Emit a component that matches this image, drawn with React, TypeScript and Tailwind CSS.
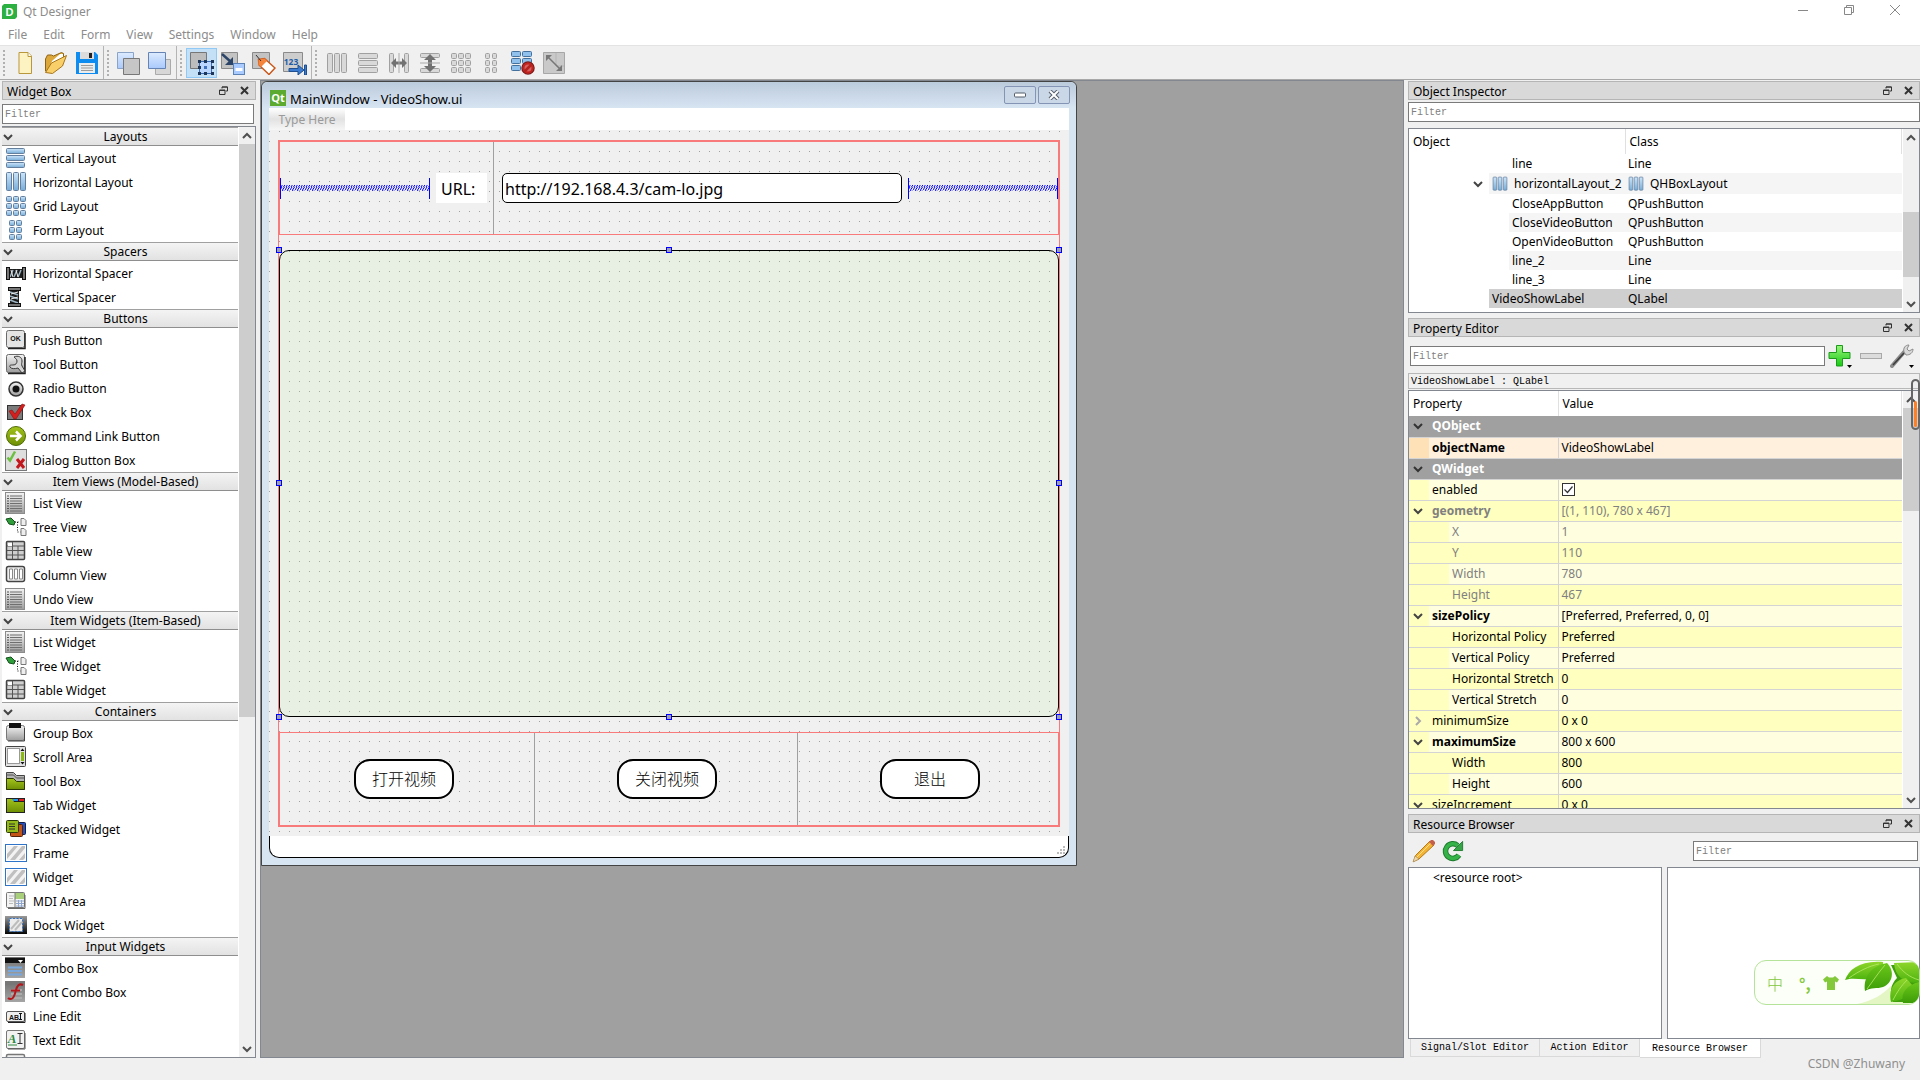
import type { ReactNode } from "react";

interface IconProps {
  name: string;
  size?: number;
}

const cells = (xs: number[], ys: number[], w: number, h: number, fill: string, stroke: string) =>
  ys.flatMap((y) =>
    xs.map((x) => (
      <rect key={`${x}-${y}`} x={x + 0.5} y={y + 0.5} width={w} height={h} rx="1" fill={fill} stroke={stroke} />
    ))
  );

const listLines = (
  <>
    <rect x="0.5" y="0.5" width="19" height="21" fill="url(#grey)" stroke="#8b8b8b" />
    <path d="M5 4h12M5 6.5h12M5 9h12M5 11.5h12M5 14h12M5 16.5h12M5 19h12" stroke="#6f6f6f" />
    <path d="M2 4h2M2 6.5h2M2 9h2M2 11.5h2M2 14h2M2 16.5h2M2 19h2" stroke="#555" />
  </>
);

const stripes = (
  <>
    <rect x="0.5" y="2.5" width="21" height="17" fill="#fff" stroke="#2f74c9" />
    <rect x="2" y="4" width="18" height="14" fill="#f3f3f3" />
    <path d="M2 12v5L13 4H9zM5 18h5L20 6V4h-3zM14 18h4l2-2v-5z" fill="#c0c0c0" />
  </>
);

// 22x22 artwork for the widget box
const widgetIcons: Record<string, ReactNode> = {
  vlayout: cells([1], [1, 8, 15], 18, 5, "url(#blueV)", "#647f9e"),
  hlayout: cells([1, 8, 15], [1], 5, 18, "url(#blueV)", "#647f9e"),
  grid: cells([1, 8, 15], [1, 8, 15], 5, 5, "url(#blueV)", "#647f9e"),
  form: cells([4, 11], [1, 8, 15], 5, 5, "url(#blueV)", "#647f9e"),
  hspacer: (
    <>
      <path d="M4 7h14v9H4z" fill="#1c1c1c" />
      <path d="M5 15l3-7M9 15l3-7M13 15l3-7" stroke="#9fb6c4" strokeWidth="1.5" />
      <path d="M6 8l2 7M11 8l2 7" stroke="#eee" />
      <rect x="1.5" y="5.5" width="3" height="12" fill="#777" stroke="#111" />
      <rect x="17.5" y="5.5" width="3" height="12" fill="#777" stroke="#111" />
    </>
  ),
  vspacer: (
    <>
      <path d="M5 4h9v14H5z" fill="#1c1c1c" />
      <path d="M5 6l8 3M5 10l8 3M5 14l8 3" stroke="#9fb6c4" strokeWidth="1.5" />
      <path d="M13 6l-7 2M13 11l-7 2" stroke="#eee" />
      <rect x="3.5" y="1.5" width="12" height="3" fill="#777" stroke="#111" />
      <rect x="3.5" y="17.5" width="12" height="3" fill="#777" stroke="#111" />
    </>
  ),
  push: (
    <>
      <rect x="1.5" y="1.5" width="18" height="17" rx="2" fill="#e4e4e4" stroke="#6a6a6a" />
      <path d="M3 19.5h17V4" fill="none" stroke="#222" strokeWidth="1.5" />
      <text x="10.5" y="12" fontSize="7" fontFamily="Liberation Sans" fontWeight="bold" textAnchor="middle" fill="#111">
        OK
      </text>
    </>
  ),
  tool: (
    <>
      <rect x="1.5" y="1.5" width="18" height="18" rx="2" fill="url(#grey)" stroke="#6a6a6a" />
      <path d="M3 20.5h17V4" fill="none" stroke="#222" strokeWidth="1.5" />
      <path
        d="M9 4c4-2 8 0 8 4 0 2-1 3 0 5l3 5-3 2-4-5c-3 1-7 1-8-1s1-2 3-2c3 0 4-2 4-4s-2-3-3-4z"
        fill="#d5d5d5"
        stroke="#3a3a3a"
      />
    </>
  ),
  radio: (
    <>
      <circle cx="11" cy="12" r="7" fill="url(#grey)" stroke="#333" strokeWidth="1.5" />
      <circle cx="11" cy="12" r="3.5" fill="#111" />
    </>
  ),
  check: (
    <>
      <rect x="2.5" y="4.5" width="15" height="14" fill="#7b7b7b" stroke="#333" />
      <path d="M4 10l3-1 3 4 7-10 3 1-9 14H9z" fill="#d3201f" stroke="#8b0f0f" strokeWidth=".6" />
    </>
  ),
  link: (
    <>
      <circle cx="11" cy="11" r="9.5" fill="url(#olive)" stroke="#4f6b06" />
      <path d="M5 11h10M11 6.5l4.5 4.5-4.5 4.5" fill="none" stroke="#fff" strokeWidth="2.5" />
    </>
  ),
  dialog: (
    <>
      <rect x="0.5" y="0.5" width="21" height="21" fill="#dedede" stroke="#777" />
      <path d="M2.5 8.5l2.5 3 5-9" fill="none" stroke="#6cbf3f" strokeWidth="2.5" />
      <path d="M12 10l7 9M19 10l-7 9" stroke="#c2191f" strokeWidth="3" />
    </>
  ),
  list: listLines,
  tree: (
    <>
      <path d="M1 3l5-1 4 4-1 3-5-1z" fill="#2f9e3a" stroke="#134f1a" />
      <path d="M10 6h5M12.5 6v10M12.5 16h3" stroke="#111" strokeDasharray="1 1.5" />
      <path d="M16 2.5h3l2 2v5h-5zM16 12.5h3l2 2v5h-5z" fill="#eee" stroke="#777" />
    </>
  ),
  table: (
    <>
      <rect x="1.5" y="1.5" width="18" height="18" rx="1" fill="#cfcfcf" stroke="#444" strokeWidth="1.5" />
      <path d="M2 6h17M2 10.5h17M2 15h17M7.5 2v17M13 6v13" stroke="#555" />
      <path d="M3 3h4v3H3z" fill="#fff" />
    </>
  ),
  column: (
    <>
      <rect x="1.5" y="2.5" width="18" height="15" rx="2" fill="#eee" stroke="#444" strokeWidth="1.5" />
      <path d="M4.5 5h3v10h-3zM9.5 5h3v10h-3zM14.5 5h3v10h-3z" fill="#fff" stroke="#888" />
    </>
  ),
  group: (
    <>
      <rect x="1.5" y="3.5" width="18" height="15" rx="2" fill="url(#grey)" stroke="#777" />
      <path d="M3 19h16.5V6" fill="none" stroke="#444" />
      <rect x="4" y="1" width="12" height="5" fill="#111" />
    </>
  ),
  scroll: (
    <>
      <rect x="0.5" y="0.5" width="20" height="20" rx="1" fill="#e2e2e2" stroke="#444" />
      <rect x="2.5" y="2.5" width="12" height="15" fill="#fff" stroke="#999" />
      <path d="M16 6h3v9h-3z" fill="#8aba12" />
      <path d="M15.500 5l2-2.500 2 2.500zM15.500 16l2 2.500 2-2.500z" fill="#111" />
    </>
  ),
  toolbox: (
    <>
      <path d="M1.5 2.5h7l3 3h8v14h-18z" fill="#b5b5b5" stroke="#444" />
      <path d="M1.5 5h7l3 3h8" fill="none" stroke="#555" />
      <path d="M1.5 8.500h7l3 3h8v8h-18z" fill="url(#olive)" stroke="#2e3a05" />
    </>
  ),
  tab: (
    <>
      <rect x="1.5" y="4.5" width="18" height="14" fill="url(#olive)" stroke="#222" />
      <path d="M7 4h13v4H9z" fill="#222" />
      <path d="M8 5h5v2H8z" fill="#2196e8" />
      <path d="M14 5h5v2h-5z" fill="#e02020" />
    </>
  ),
  stacked: (
    <>
      <rect x="8.5" y="4.5" width="12" height="12" rx="1" fill="#2450c0" stroke="#111d4a" />
      <rect x="5.5" y="6.5" width="12" height="12" rx="1" fill="#c35415" stroke="#54220a" />
      <rect x="1.5" y="2.5" width="12" height="12" rx="1" fill="#93b91b" stroke="#2e3a05" />
      <path d="M4 6h6M4 8.500h6M4 11h6" stroke="#333" />
    </>
  ),
  frame: stripes,
  widget: stripes,
  mdi: (
    <>
      <rect x="1.5" y="2.5" width="18" height="15" rx="1" fill="#f4f4f4" stroke="#777" />
      <path d="M10 3h9v6h-9z" fill="#a9cf7c" />
      <path d="M4 6h5M4 8.500h4M4 11h5M4 13.500h4" stroke="#bbb" />
      <path d="M11 11h8M11 13.500h8M11 16h8M13.500 10v7M16.500 10v7" stroke="#8fa6cf" />
      <path d="M10 3v15" stroke="#777" />
      <path d="M3 18.500h17V5" fill="none" stroke="#666" />
    </>
  ),
  dock: (
    <>
      <rect x="0" y="2" width="22" height="18" fill="url(#dark)" />
      <rect x="4.5" y="4.5" width="13" height="13" fill="#ececec" stroke="#2f74c9" strokeDasharray="2 1.5" />
      <path d="M6 15l8-9M10 16l7-8" stroke="#bcbcbc" strokeWidth="2" />
    </>
  ),
  combo: (
    <>
      <rect x="0" y="0" width="20" height="21" fill="url(#dark2)" />
      <path d="M0 1h20v5H0z" fill="#111" />
      <path d="M13 3h5l-2.500 3z" fill="#fff" />
      <path d="M3 10.500h14M3 14h14M3 17.500h14" stroke="#79a7dc" strokeWidth="2" />
    </>
  ),
  font: (
    <>
      <rect x="0" y="0" width="20" height="21" fill="url(#dark2)" />
      <path d="M0 0h20v4H0z" fill="#777" />
      <path d="M6 9h11M6 13h11M6 17h11" stroke="#b4b4b4" strokeWidth="1.5" />
      <path d="M18 4c-4-2-6 1-7 5s-2 9-5 9c-1 0-2 0-3-1M6 9.500h9" fill="none" stroke="#b3161b" strokeWidth="2" />
    </>
  ),
  line: (
    <>
      <rect x="1.5" y="6.5" width="18" height="10" rx="1.5" fill="#eee" stroke="#555" />
      <path d="M3 17.500h17V8" fill="none" stroke="#222" />
      <text x="9" y="14.5" fontSize="7" fontFamily="Liberation Sans" fontWeight="bold" textAnchor="middle" fill="#111">
        AB
      </text>
      <path d="M14 8.500h3M15.500 8.500v6M14 14.500h3" stroke="#111" />
    </>
  ),
  text: (
    <>
      <rect x="1.5" y="1.5" width="18" height="18" rx="1.5" fill="#f1f1f1" stroke="#777" />
      <path d="M3 20h17V4" fill="none" stroke="#555" />
      <text
        x="7"
        y="14"
        fontSize="13"
        fontFamily="Liberation Serif"
        fontStyle="italic"
        fontWeight="bold"
        textAnchor="middle"
        fill="#2c8a3f"
      >
        A
      </text>
      <path d="M3 16h9" stroke="#2c8a3f" />
      <path d="M12.500 4.500h5M15 4.500v10M12.500 14.500h5" stroke="#333" />
    </>
  ),
  plain: <rect x="1.5" y="1.5" width="18" height="18" rx="1.5" fill="#f1f1f1" stroke="#777" strokeWidth="1.5" />,
};

// 24x24 artwork for the tool bars
const grey = "#d9d9d9";
const greyLine = "#a0a0a0";
const toolIcons: Record<string, ReactNode> = {
  new: (
    <>
      <path d="M6 1.500h9l3.500 3.500v17.500H6z" fill="#fdf3c2" stroke="#b9973c" />
      <path d="M15 1.500v4h3.500" fill="#fff" stroke="#b9973c" />
    </>
  ),
  open: (
    <>
      <path d="M1.500 20V8l2-4h4l2 1 8-3.500 2 1v5l-14 14z" fill="#dda83b" stroke="#8f6314" />
      <path d="M5 20l3-10 8-7h3v5z" fill="#fff" />
      <path d="M1.500 21.500l6-9.500 15-7.500-4 10.500-10 7.500z" fill="#f8cf68" stroke="#a87519" />
    </>
  ),
  save: (
    <>
      <path d="M1 1h19l3 3v19H1z" fill="#0f8cf0" />
      <path d="M5 1h14v7H5z" fill="#dcdcdc" />
      <path d="M14 2h3v5h-3z" fill="#222" />
      <path d="M4 12h16v10H4z" fill="#ececec" />
      <path d="M6 14.500h12M6 17h12M6 19.500h12" stroke="#9b9b9b" />
    </>
  ),
  back: (
    <>
      <path d="M0.500 1.500h16v16h-16z" fill="url(#paleBlue)" stroke="#8ba3c7" />
      <path d="M6.500 7.500h16v16h-16z" fill="#c6c6c6" stroke="#777" />
    </>
  ),
  front: (
    <>
      <path d="M7.500 8.500h15v15h-15z" fill="#d7d7d7" stroke="#aaa" />
      <path d="M0.500 1.500h17v16h-17z" fill="url(#paleBlue)" stroke="#6584b5" />
    </>
  ),
  widgets: (
    <>
      <path d="M0.500 1.500h16v16h-16z" fill="#bdbdbd" stroke="#777" />
      <rect x="9.5" y="10.5" width="12" height="12" fill="#bcd7ff" stroke="#3c6db5" />
      <path
        d="M8 9h3v3H8zM14 9h3v3h-3zM21 9h3v3h-3zM8 15h3v3H8zM21 15h3v3h-3zM8 21h3v3H8zM14 21h3v3h-3zM21 21h3v3h-3z"
        fill="#1d3557"
      />
      <path d="M14 15h3v3h-3z" fill="#3f71bd" />
    </>
  ),
  signals: (
    <>
      <path d="M0.500 1.500h16v16h-16z" fill="#c3c3c3" stroke="#8a8a8a" />
      <path d="M1 3l9 8" stroke="#2b4468" strokeWidth="2.5" />
      <path d="M12 6v8H4z" fill="#2b4468" />
      <rect x="12.500" y="12.500" width="11" height="11" fill="#a9cbff" stroke="#5d82b8" />
      <path d="M14.500 17h7v3h-7z" fill="#fff" />
    </>
  ),
  buddies: (
    <>
      <path d="M0.500 1.500h17v16h-17z" fill="#c3c3c3" stroke="#8a8a8a" />
      <path d="M6.500 8.500l6 -1 10.500 9.500-6 6.500-10-9.500z" fill="#fff" stroke="#c9571a" strokeWidth="1.5" />
      <path d="M6.500 8.500l6-1 2.500 2.500-6 6-2.500-2.500z" fill="#f5843c" />
      <path d="M4 4l5 6" stroke="#333" />
    </>
  ),
  taborder: (
    <>
      <path d="M0.500 1.500h19v19h-19z" fill="#cdcdcd" stroke="#8a8a8a" />
      <text x="8" y="14" fontSize="8.5" fontFamily="Noto Sans" fontWeight="bold" textAnchor="middle" fill="#1f5da8">
        123
      </text>
      <path d="M6 17.500h9v-3.500l6 5-6 5v-3.500H6zM21.500 14h2v10h-2z" fill="#3b7cd0" stroke="#20508f" />
    </>
  ),
  hlay: cells([2, 9, 16], [2], 5, 19, grey, greyLine),
  vlay: cells([2], [2, 9, 16], 19, 5, grey, greyLine),
  hsplit: (
    <>
      {cells([2, 17], [2], 4, 19, grey, greyLine)}
      <path d="M4 12l5-5v3.500h6V7l5 5-5 5v-3.500H9V17z" fill="#717171" />
      <path d="M12 2v20" stroke="#aaa" />
    </>
  ),
  vsplit: (
    <>
      {cells([2], [2, 17], 19, 4, grey, greyLine)}
      <path d="M12 3l6 6h-4v6h4l-6 6-6-6h4V9H6z" fill="#717171" />
      <path d="M2 12h20" stroke="#aaa" />
    </>
  ),
  gridlay: cells([2, 9, 16], [2, 9, 16], 5, 5, grey, greyLine),
  formlay: cells([5, 12], [2, 9, 16], 4, 5, grey, greyLine),
  break: (
    <>
      {cells([0, 11], [0, 7, 14], 9, 5, "#8fc1ec", "#44719c")}
      <circle cx="17" cy="17" r="6" fill="#d5625e" stroke="#7d1c1a" strokeWidth="1.5" />
      <circle cx="17" cy="17" r="4.5" fill="none" stroke="#c3231f" strokeWidth="2" />
      <path d="M13.500 20.500l7-7" stroke="#b5221d" strokeWidth="2.5" />
    </>
  ),
  adjust: (
    <>
      <path d="M1.500 1.500h21v21h-21z" fill="#c9c9c9" stroke="#a7a7a7" />
      <path d="M14 2v13h8" fill="none" stroke="#b5b5b5" />
      <path d="M6 6l12 12" stroke="#777" strokeWidth="1.5" />
      <path d="M4 4h6l-6 6zM20 20h-6l6-6z" fill="#777" />
    </>
  ),
  plus: (
    <path d="M8.500 1.500h6v7h7.500v6h-7.500v7.500h-6v-7.500H1v-6h7.500z" fill="url(#plusGreen)" stroke="#1c9a1c" />
  ),
  minus: <rect x="1.5" y="9.5" width="21" height="5" fill="#dcdcdc" stroke="#a9a9a9" />,
  wrench: (
    <>
      <path d="M2 22L15 7" stroke="#8b8b8b" strokeWidth="4" strokeLinecap="round" />
      <path d="M3 21L14 9" stroke="#3d3d3d" strokeWidth="1.5" />
      <path d="M14 8c-1-4 1-7 5-7l-2 4 2 2 4-2c0 4-3 6-7 6z" fill="#d8d8d8" stroke="#8d8d8d" />
    </>
  ),
  pencil: (
    <>
      <path d="M1.500 22.500l2-6L18 2l4 4L7 20z" fill="#f3b335" stroke="#b57a14" />
      <path d="M5 18L19 4" stroke="#ffdf87" />
      <path d="M17 3l2-2h2l2 2v2l-2 2z" fill="#c4604a" />
      <path d="M1 23l2-6 4 3z" fill="#f0d9ac" stroke="#9b7b47" strokeWidth=".5" />
    </>
  ),
  reload: (
    <>
      <path d="M18.500 16.500A8 8 0 1 1 17 6" fill="none" stroke="#1d7a2c" strokeWidth="6" />
      <path d="M18.500 16.500A8 8 0 1 1 17 6" fill="none" stroke="#35b348" strokeWidth="4" />
      <path d="M22.500 1.500v10h-10z" fill="#35a548" stroke="#1d7a2c" />
    </>
  ),
};

function Icon({ name, size = 22 }: IconProps) {
  const tool = name in toolIcons;
  return (
    <svg width={size} height={size} viewBox={tool ? "0 0 24 24" : "0 0 22 22"} className="shrink-0" aria-hidden="true">
      {tool ? toolIcons[name] : widgetIcons[name]}
    </svg>
  );
}

function Chevron({ className }: { className?: string }) {
  return (
    <svg width="10" height="8" viewBox="0 0 10 8" className={`shrink-0 ${className ?? ""}`} aria-hidden="true">
      <path d="M1 2l4 4 4-4" fill="none" stroke="currentColor" strokeWidth="2" />
    </svg>
  );
}

const gradients = [
  ["grey", "#f4f4f4", "#9d9d9d"],
  ["blueV", "#cde6fa", "#78add8"],
  ["olive", "#a3c31c", "#6f8f05"],
  ["dark", "#9a9a9a", "#050505"],
  ["dark2", "#707070", "#a5a5a5"],
  ["paleBlue", "#dcebff", "#a9c8fb"],
  ["plusGreen", "#9bf57c", "#18c914"],
  ["leafA", "#8fd62c", "#4db30e"],
  ["leafB", "#6cc81a", "#3c9c08"],
];

function Gradients() {
  return (
    <svg width="0" height="0" className="absolute" aria-hidden="true">
      <defs>
        {gradients.map(([id, from, to]) => (
          <linearGradient key={id} id={id} x1="0" y1="0" x2="0" y2="1">
            <stop offset="0" stopColor={from} />
            <stop offset="1" stopColor={to} />
          </linearGradient>
        ))}
        <pattern id="spring" width="5" height="6" patternUnits="userSpaceOnUse">
          <path d="M0 6l2-3M1 3l2-3M2.500 6l2-3M3.500 3l2-3" stroke="#00f" fill="none" />
        </pattern>
      </defs>
    </svg>
  );
}

function DockHeader({ title }: { title: string }) {
  return (
    <header className="flex h-[19px] shrink-0 items-center border border-[#b5b5b5] bg-[#d9d9d9] pl-1">
      <h2 className="flex-1 pt-0.5 leading-4">{title}</h2>
      <button aria-label={`Float ${title}`} className="mr-3">
        <svg width="9" height="9" viewBox="0 0 9 9">
          <path d="M3 2.500V1h5.500v4H7M3 1h5.500" fill="none" stroke="#333" />
          <path d="M0.500 4h5.500v4.500h-5.500zM0.500 4.500h5.500" fill="none" stroke="#333" />
        </svg>
      </button>
      <button aria-label={`Close ${title}`} className="mr-1.5">
        <svg width="9" height="9" viewBox="0 0 9 9">
          <path d="M1 1l7 7M8 1L1 8" stroke="#333" strokeWidth="2" />
        </svg>
      </button>
    </header>
  );
}

function Filter({ label, className }: { label: string; className?: string }) {
  return (
    <input
      type="text"
      aria-label={label}
      placeholder="Filter"
      className={`h-5 min-w-0 border border-[#7a7a7a] bg-white px-0.5 font-['Liberation_Mono','Noto_Sans_CJK_SC',monospace] text-[10px] text-black placeholder:text-[#808080] ${className ?? ""}`}
    />
  );
}

function ScrollBar({ thumb }: { thumb: string }) {
  return (
    <div className="flex w-4 shrink-0 flex-col bg-[#f0f0f0] text-[#505050]">
      <div className="flex h-[17px] items-center justify-center">
        <Chevron className="rotate-180" />
      </div>
      <div className="min-h-0 flex-1">
        <div className={`bg-[#cdcdcd] ${thumb}`} />
      </div>
      <div className="flex h-[17px] items-center justify-center">
        <Chevron />
      </div>
    </div>
  );
}

const toolGroups = [
  ["new", "open", "save"],
  ["back", "front"],
  ["widgets", "signals", "buddies", "taborder"],
  ["hlay", "vlay", "hsplit", "vsplit", "gridlay", "formlay", "break", "adjust"],
];

function ToolBar() {
  return (
    <div className="flex h-[35px] shrink-0 border-y border-[#e3e3e3] border-b-[#a8a8a8] bg-[#f0f0f0]">
      {toolGroups.map((group, i) => (
        <div key={i} className={`flex items-center pl-[3px] pr-px ${i < 3 ? "border-r border-[#b4b4b4]" : ""}`}>
          <div className="mr-1 h-[26px] w-0.5 bg-[repeating-linear-gradient(#b0b0b0_0_2px,transparent_2px_4px)]" />
          {group.map((name) => (
            <button
              key={name}
              aria-label={name}
              className={`flex h-[30px] w-[31px] items-center justify-center ${name === "widgets" ? "border border-[#90c8f6] bg-[#c4e0f6]" : ""}`}
            >
              <Icon name={name} size={24} />
            </button>
          ))}
        </div>
      ))}
    </div>
  );
}

const sections: { title: string; items: [string, string][] }[] = [
  {
    title: "Layouts",
    items: [
      ["vlayout", "Vertical Layout"],
      ["hlayout", "Horizontal Layout"],
      ["grid", "Grid Layout"],
      ["form", "Form Layout"],
    ],
  },
  {
    title: "Spacers",
    items: [
      ["hspacer", "Horizontal Spacer"],
      ["vspacer", "Vertical Spacer"],
    ],
  },
  {
    title: "Buttons",
    items: [
      ["push", "Push Button"],
      ["tool", "Tool Button"],
      ["radio", "Radio Button"],
      ["check", "Check Box"],
      ["link", "Command Link Button"],
      ["dialog", "Dialog Button Box"],
    ],
  },
  {
    title: "Item Views (Model-Based)",
    items: [
      ["list", "List View"],
      ["tree", "Tree View"],
      ["table", "Table View"],
      ["column", "Column View"],
      ["list", "Undo View"],
    ],
  },
  {
    title: "Item Widgets (Item-Based)",
    items: [
      ["list", "List Widget"],
      ["tree", "Tree Widget"],
      ["table", "Table Widget"],
    ],
  },
  {
    title: "Containers",
    items: [
      ["group", "Group Box"],
      ["scroll", "Scroll Area"],
      ["toolbox", "Tool Box"],
      ["tab", "Tab Widget"],
      ["stacked", "Stacked Widget"],
      ["frame", "Frame"],
      ["widget", "Widget"],
      ["mdi", "MDI Area"],
      ["dock", "Dock Widget"],
    ],
  },
  {
    title: "Input Widgets",
    items: [
      ["combo", "Combo Box"],
      ["font", "Font Combo Box"],
      ["line", "Line Edit"],
      ["text", "Text Edit"],
      ["plain", ""],
    ],
  },
];

function WidgetBox() {
  return (
    <aside className="flex w-[254px] shrink-0 flex-col pt-px">
      <DockHeader title="Widget Box" />
      <Filter label="Filter widgets" className="mt-1 mr-0.5 shrink-0" />
      <div className="mt-0.5 flex min-h-0 flex-1 border border-[#828790] border-l-0 bg-white">
        <div className="min-w-0 flex-1 overflow-hidden pr-px">
          {sections.map(({ title, items }) => (
            <section key={title}>
              <button className="flex h-[19px] w-full items-center border-y border-t-[#a0a0a0] border-b-[#8e8e8e] bg-linear-to-b from-[#f4f4f4] to-[#e2e2e2] pl-px text-black">
                <Chevron className="text-[#444]" />
                <span className="flex-1 text-center leading-4">{title}</span>
              </button>
              <ul>
                {items.map(([icon, label], i) => (
                  <li key={i} className="flex h-6 items-center gap-1.5 pl-[3px]">
                    <Icon name={icon} />
                    <span className="pt-0.5">{label}</span>
                  </li>
                ))}
              </ul>
            </section>
          ))}
        </div>
        <ScrollBar thumb="h-[64%]" />
      </div>
    </aside>
  );
}

function Spacer() {
  return (
    <svg height="21" className="w-[150px] shrink-0" aria-hidden="true">
      <rect x="1" y="7" width="148" height="6" fill="url(#spring)" />
      <path d="M0.500 0v21M149.500 0v21" stroke="#00f" />
    </svg>
  );
}

function VLine() {
  return <div className="h-full w-[3px] shrink-0 border-l border-[#a0a0a0]" />;
}

const handles = [
  "-left-1 -top-1",
  "left-1/2 -ml-[3px] -top-1",
  "-right-1 -top-1",
  "-left-1 top-1/2 -mt-1",
  "-right-1 top-1/2 -mt-1",
  "-left-1 -bottom-1",
  "left-1/2 -ml-[3px] -bottom-1",
  "-right-1 -bottom-1",
];

function FormWindow() {
  return (
    <section className="flex w-[816px] flex-col rounded-t-md border border-[#444] bg-[#d7e4f2] px-[7px] pb-[7px]">
      <header className="-mx-[7px] flex h-[26px] rounded-t-md bg-linear-to-b from-[#bccbdc] to-[#d7e4f2] pl-2 pr-1.5 pt-1">
        <svg width="16" height="16" viewBox="0 0 16 16" className="mt-1" aria-hidden="true">
          <rect width="16" height="16" fill="#5caa2f" />
          <text x="8" y="12" fontSize="11" fontFamily="Open Sans" fontWeight="bold" textAnchor="middle" fill="#fff">
            Qt
          </text>
        </svg>
        <h1 className="ml-1 flex-1 pt-1 text-[13px] leading-[18px]">MainWindow - VideoShow.ui</h1>
        <button
          aria-label="Minimize form"
          className="mr-0.5 flex h-[18px] w-8 items-center justify-center rounded-xs border border-[#8494b5] bg-[#c9d7e7]"
        >
          <svg width="12" height="6" viewBox="0 0 12 6">
            <rect x="0.5" y="1" width="11" height="4" rx="1" fill="#fff" stroke="#555d6b" />
          </svg>
        </button>
        <button
          aria-label="Close form"
          className="flex h-[18px] w-8 items-center justify-center rounded-xs border border-[#8494b5] bg-[#c9d7e7]"
        >
          <svg width="12" height="10" viewBox="0 0 12 10">
            <path d="M2 1l8 8M10 1L2 9" stroke="#555d6b" strokeWidth="4" />
            <path d="M2 1l8 8M10 1L2 9" stroke="#fff" strokeWidth="2" />
          </svg>
        </button>
      </header>

      <div className="flex h-[22px] bg-white">
        <button className="w-[76px] bg-linear-to-b from-white via-[#e2e2e2] to-[#f6f6f6] pt-0.5 text-[#9a9a9a]">
          Type Here
        </button>
      </div>

      {/* 10px dot grid of the form canvas */}
      <div className="bg-[linear-gradient(90deg,transparent_1px,#f0f0f0_1px),linear-gradient(#f0f0f0_1px,#a0a0a0_1px_2px,#f0f0f0_2px)] bg-[length:10px_10px] px-[9px] pt-2.5 pb-[9px]">
        <div className="flex flex-col border border-[#f97a7a]">
          <div className="flex h-[94px] items-center gap-1.5 border border-[#f97a7a]">
            <Spacer />
            <label htmlFor="url" className="h-[30px] w-[51px] shrink-0 bg-white pl-[5px] text-base leading-8">
              URL:
            </label>
            <VLine />
            <input
              id="url"
              type="text"
              defaultValue="http://192.168.4.3/cam-lo.jpg"
              className="h-[30px] min-w-0 flex-1 rounded-[5px] border border-black bg-white px-0.5 pt-0.5 text-base"
            />
            <Spacer />
          </div>

          <div className="relative my-[15px] h-[467px] rounded-[10px] border border-black bg-[#e8f0e4] bg-[linear-gradient(90deg,transparent_1px,#e8f0e4_1px),linear-gradient(#e8f0e4_1px,#a4aca0_1px_2px,#e8f0e4_2px)] bg-[length:10px_10px] bg-[position:9px_9px]">
            {handles.map((pos) => (
              <span key={pos} className={`absolute size-1.5 border border-[#00f] bg-[#a0a0a0] ${pos}`} />
            ))}
          </div>

          <div className="flex h-[94px] items-center gap-1.5 border border-[#f97a7a] pr-1">
            <div className="flex flex-1 justify-center">
              <button className="h-10 w-[100px] rounded-2xl border-2 border-black bg-white text-base font-light">
                打开视频
              </button>
            </div>
            <VLine />
            <div className="flex flex-1 justify-center">
              <button className="h-10 w-[100px] rounded-2xl border-2 border-black bg-white text-base font-light">
                关闭视频
              </button>
            </div>
            <VLine />
            <div className="flex flex-1 justify-center">
              <button className="h-10 w-[100px] rounded-2xl border-2 border-black bg-white text-base font-light">
                退出
              </button>
            </div>
          </div>
        </div>
      </div>

      <footer className="flex h-[22px] items-end justify-end rounded-b-[10px] border border-t-0 border-black bg-white p-0.5">
        <svg width="9" height="9" viewBox="0 0 9 9" aria-hidden="true">
          <path d="M6 0h2v2H6zM3 3h2v2H3zM6 3h2v2H6zM0 6h2v2H0zM3 6h2v2H3zM6 6h2v2H6z" fill="#bbb" />
        </svg>
      </footer>
    </section>
  );
}

interface TreeRow {
  name: string;
  cls: string;
  level: "child" | "layout" | "selected";
}

const treeRows: TreeRow[] = [
  { name: "line", cls: "Line", level: "child" },
  { name: "horizontalLayout_2", cls: "QHBoxLayout", level: "layout" },
  { name: "CloseAppButton", cls: "QPushButton", level: "child" },
  { name: "CloseVideoButton", cls: "QPushButton", level: "child" },
  { name: "OpenVideoButton", cls: "QPushButton", level: "child" },
  { name: "line_2", cls: "Line", level: "child" },
  { name: "line_3", cls: "Line", level: "child" },
  { name: "VideoShowLabel", cls: "QLabel", level: "selected" },
];

function ObjectInspector() {
  return (
    <section className="flex shrink-0 flex-col">
      <DockHeader title="Object Inspector" />
      <Filter label="Filter objects" className="mt-0.5" />
      <div className="mt-1.5 flex h-[185px] border border-[#828790] bg-white">
        <div className="min-w-0 flex-1 overflow-hidden pr-px">
          <table className="w-full table-fixed border-collapse text-left">
            <thead>
              <tr className="h-[25px]">
                <th className="w-[216px] border-r border-[#e0e0e0] p-0 pl-1 font-normal">Object</th>
                <th className="border-r border-[#e0e0e0] p-0 pl-1 font-normal">Class</th>
              </tr>
            </thead>
            <tbody>
              {treeRows.map(({ name, cls, level }, i) => {
                const fill = level === "selected" ? "bg-[#cfcfcf]" : i % 2 ? "bg-[#f5f5f5]" : "";
                return (
                  <tr key={name} className={level === "layout" ? "h-[21px]" : "h-[19px]"}>
                    <td className="p-0">
                      <div className="flex">
                        <span
                          className={`flex shrink-0 items-center ${level === "child" ? "w-[100px]" : "w-20"} ${level === "layout" ? "pl-16" : ""}`}
                        >
                          {level === "layout" && <Chevron className="text-[#444]" />}
                        </span>
                        <span
                          className={`flex flex-1 items-center gap-1.5 whitespace-nowrap pl-[3px] ${level === "layout" ? "leading-[21px]" : "leading-[19px]"} ${fill}`}
                        >
                          {level === "layout" && <Icon name="hlayout" size={16} />}
                          {name}
                        </span>
                      </div>
                    </td>
                    <td className={`p-0 pl-[3px] ${fill}`}>
                      <span className="flex items-center gap-1.5">
                        {level === "layout" && <Icon name="hlayout" size={16} />}
                        {cls}
                      </span>
                    </td>
                  </tr>
                );
              })}
            </tbody>
          </table>
        </div>
        <ScrollBar thumb="relative top-[44%] h-[44%]" />
      </div>
    </section>
  );
}

interface PropRow {
  name: string;
  value?: string;
  kind?: "group" | "leaf" | "open" | "closed" | "sub";
  bold?: boolean;
  dim?: boolean;
  checkbox?: boolean;
}

const propRows: PropRow[] = [
  { name: "QObject", kind: "group" },
  { name: "objectName", value: "VideoShowLabel", bold: true },
  { name: "QWidget", kind: "group" },
  { name: "enabled", checkbox: true },
  { name: "geometry", value: "[(1, 110), 780 x 467]", kind: "open", bold: true, dim: true },
  { name: "X", value: "1", kind: "sub", dim: true },
  { name: "Y", value: "110", kind: "sub", dim: true },
  { name: "Width", value: "780", kind: "sub", dim: true },
  { name: "Height", value: "467", kind: "sub", dim: true },
  { name: "sizePolicy", value: "[Preferred, Preferred, 0, 0]", kind: "open", bold: true },
  { name: "Horizontal Policy", value: "Preferred", kind: "sub" },
  { name: "Vertical Policy", value: "Preferred", kind: "sub" },
  { name: "Horizontal Stretch", value: "0", kind: "sub" },
  { name: "Vertical Stretch", value: "0", kind: "sub" },
  { name: "minimumSize", value: "0 x 0", kind: "closed" },
  { name: "maximumSize", value: "800 x 600", kind: "open", bold: true },
  { name: "Width", value: "800", kind: "sub" },
  { name: "Height", value: "600", kind: "sub" },
  { name: "sizeIncrement", value: "0 x 0", kind: "open" },
];

function PropertyRow({ row, index }: { row: PropRow; index: number }) {
  if (row.kind === "group") {
    return (
      <tr className="h-[21px] border-b border-[#d4d4d4] bg-[#a0a0a0] font-bold text-white">
        <td colSpan={2} className="p-0 pl-1">
          <span className="flex items-center gap-[9px]">
            <Chevron className="text-[#333]" />
            {row.name}
          </span>
        </td>
      </tr>
    );
  }
  const first = index === 1;
  const even = index % 2 === 0;
  const fill = first ? "bg-[#fff0de]" : even ? "bg-[#ffffbf]" : "bg-[#ffffdf]";
  const indent = first ? "bg-[#ffe1b8]" : "bg-[#ffffbf]";
  return (
    <tr className={`h-[21px] border-b border-[#d4d4d4] ${fill} ${row.dim ? "text-[#808080]" : ""}`}>
      <td className="border-r border-[#d4d4d4] p-0">
        <div className="flex h-5 items-center whitespace-nowrap">
          <span className={`flex h-5 shrink-0 items-center pl-1 ${indent} ${row.kind === "sub" ? "w-10" : "w-5"}`}>
            {row.kind === "open" && <Chevron className="text-[#444]" />}
            {row.kind === "closed" && <Chevron className="-rotate-90 text-[#aaa]" />}
          </span>
          <span className={`pl-[3px] ${row.bold ? "font-bold" : ""}`}>{row.name}</span>
        </div>
      </td>
      <td className="p-0 pl-[3px]">
        {row.checkbox ? (
          <span className="relative flex size-[13px]">
            <input
              type="checkbox"
              defaultChecked
              aria-label={row.name}
              className="size-[13px] appearance-none border border-[#333] bg-white"
            />
            <svg width="13" height="13" viewBox="0 0 13 13" className="pointer-events-none absolute inset-0">
              <path d="M2.500 6.500l3 3 5-6" fill="none" stroke="#333" strokeWidth="1.2" />
            </svg>
          </span>
        ) : (
          row.value
        )}
      </td>
    </tr>
  );
}

function MenuArrow() {
  return (
    <svg width="5" height="3" viewBox="0 0 5 3" className="absolute right-0 bottom-0" aria-hidden="true">
      <path d="M0 0h5L2.500 3z" fill="#000" />
    </svg>
  );
}

function PropertyEditor() {
  return (
    <section className="mt-[5px] flex min-h-0 flex-1 flex-col">
      <DockHeader title="Property Editor" />
      <div className="flex h-9 shrink-0 items-center pl-0.5 pr-1.5 pt-0.5">
        <Filter label="Filter properties" className="flex-1" />
        <button aria-label="Add property" className="relative ml-[3px]">
          <Icon name="plus" size={24} />
          <MenuArrow />
        </button>
        <button aria-label="Remove property" className="ml-[7px]">
          <Icon name="minus" size={24} />
        </button>
        <button aria-label="Configure" className="relative ml-[7px]">
          <Icon name="wrench" size={24} />
          <MenuArrow />
        </button>
      </div>
      <p className="h-4 shrink-0 border border-[#b8b8b8] pl-0.5 font-['Liberation_Mono','Noto_Sans_CJK_SC',monospace] text-[10px] leading-4">
        VideoShowLabel : QLabel
      </p>
      <div className="mt-px flex min-h-0 flex-1 border border-[#828790] bg-white">
        <div className="min-w-0 flex-1 overflow-hidden pr-px">
          <table className="w-full table-fixed border-collapse text-left">
            <thead>
              <tr className="h-[25px]">
                <th className="w-[149px] border-r border-[#e0e0e0] p-0 pl-1 font-normal">Property</th>
                <th className="border-r border-[#e0e0e0] p-0 pl-1 font-normal">Value</th>
              </tr>
            </thead>
            <tbody>
              {propRows.map((row, i) => (
                <PropertyRow key={i} row={row} index={i} />
              ))}
            </tbody>
          </table>
        </div>
        <ScrollBar thumb="h-[27%]" />
      </div>
    </section>
  );
}

function InputMethodBar() {
  return (
    <div className="absolute right-0 bottom-[34px] flex h-[45px] w-[166px] items-center overflow-hidden rounded-xl border border-[#b6e39a] bg-[#fbfff8] pl-3 text-[#84c83c]">
      <span className="font-['Noto_Sans_CJK_SC',sans-serif] text-base font-light">中</span>
      <span className="ml-4 font-['Noto_Sans_CJK_SC',sans-serif] text-base font-bold">°,</span>
      <svg width="16" height="14" viewBox="0 0 16 14" className="ml-3" aria-hidden="true">
        <path d="M4 0l2 1.500h4L12 0l4 3.500-2 3-2-1V14H4V5.500l-2 1-2-3z" fill="#84c83c" />
      </svg>
      <svg width="76" height="43" viewBox="0 0 76 43" className="absolute top-0 right-0" aria-hidden="true">
        <path d="M14 43c16-3 26-10 34-18l28-6v24z" fill="#e4f6c4" />
        <path d="M48 4h28v37H50c-4-10-2-18 4-24z" fill="#3f9e0c" />
        <path d="M2 19C6 8 18-1 40 1c2 10-6 16-15 17-8 1-15-2-23 1z" fill="url(#leafA)" />
        <path d="M22 30c-2-14 6-25 22-28 8 8 6 20-4 24-6 2-12 0-18 4z" fill="url(#leafB)" />
        <path d="M51 2l25-1v20c-12 3-24-4-25-19z" fill="url(#leafA)" />
        <path d="M48 41c-3-12 3-22 15-24l7 8c0 8-8 14-22 16z" fill="url(#leafA)" />
        <path d="M60 42c-3-10 4-18 16-21v21z" fill="url(#leafB)" />
        <path
          d="M6 17C16 10 26 5 36 3M24 28c6-8 11-16 18-24M50 39c4-8 8-14 14-20M54 3c6 8 12 13 22 16"
          fill="none"
          stroke="#b8ea6a"
          strokeWidth=".8"
        />
      </svg>
    </div>
  );
}

function ResourceBrowser() {
  return (
    <section className="mt-[5px] flex shrink-0 flex-col">
      <DockHeader title="Resource Browser" />
      <div className="flex h-[34px] items-center pl-1 pr-0.5 pt-0.5">
        <button aria-label="Edit resources">
          <Icon name="pencil" size={24} />
        </button>
        <button aria-label="Reload" className="ml-1.5">
          <Icon name="reload" size={22} />
        </button>
        <Filter label="Filter resources" className="ml-auto w-[225px]" />
      </div>
      <div className="relative grid h-[172px] grid-cols-2 gap-[5px]">
        <div className="border border-[#828790] bg-white pt-0.5 pl-6">&lt;resource root&gt;</div>
        <div className="border border-[#828790] bg-white" />
        <InputMethodBar />
      </div>
      <div className="flex h-[19px] items-start pl-0.5 font-['Liberation_Mono','Noto_Sans_CJK_SC',monospace] text-[10px]">
        <button className="h-[18px] w-[130px] border border-t-0 border-[#d9d9d9]">Signal/Slot Editor</button>
        <button className="h-[18px] w-[100px] border border-t-0 border-l-0 border-[#d9d9d9]">Action Editor</button>
        <button className="h-[19px] w-[121px] border border-t-0 border-l-0 border-[#d9d9d9] bg-white pt-0.5">
          Resource Browser
        </button>
      </div>
    </section>
  );
}

const menus = ["File", "Edit", "Form", "View", "Settings", "Window", "Help"];

export default function App() {
  return (
    <div className="flex h-screen flex-col overflow-hidden bg-[#f0f0f0] font-['Noto_Sans','Noto_Sans_CJK_SC',sans-serif] text-xs text-black">
      <Gradients />
      <header className="flex h-[23px] shrink-0 items-center bg-white pl-0.5 text-[#8c8c8c]">
        <svg width="15" height="15" viewBox="0 0 15 15" aria-hidden="true">
          <path d="M2 0h13v13l-2 2H0V2z" fill="#2bb041" />
          <text x="7.5" y="11.5" fontSize="11" fontFamily="Liberation Sans" fontWeight="bold" textAnchor="middle" fill="#fff">
            D
          </text>
        </svg>
        <span className="ml-1.5 flex-1">Qt Designer</span>
        <div className="flex h-5 self-start pr-0.5">
          <button aria-label="Minimize" className="flex w-[46px] items-center justify-center">
            <svg width="10" height="10" viewBox="0 0 10 10">
              <path d="M0 5.500h10" stroke="#888" />
            </svg>
          </button>
          <button aria-label="Restore" className="flex w-[46px] items-center justify-center">
            <svg width="10" height="10" viewBox="0 0 10 10" fill="none" stroke="#888">
              <path d="M0.500 2.500h7v7h-7zM2.500 2.500v-2h7v7h-2" />
            </svg>
          </button>
          <button aria-label="Close" className="flex w-[46px] items-center justify-center">
            <svg width="10" height="10" viewBox="0 0 10 10">
              <path d="M0 0l10 10M10 0L0 10" stroke="#888" />
            </svg>
          </button>
        </div>
      </header>
      <nav className="flex h-[22px] shrink-0 items-center bg-white pt-0.5 text-[#8c8c8c]">
        {menus.map((menu) => (
          <button key={menu} className="px-2">
            {menu}
          </button>
        ))}
      </nav>
      <ToolBar />
      <div className="flex min-h-0 flex-1 gap-1 pl-0.5">
        <WidgetBox />
        <main className="min-w-0 flex-1 overflow-hidden border border-[#828790] bg-[#a0a0a0]">
          <FormWindow />
        </main>
        <aside className="relative flex w-[512px] shrink-0 flex-col pt-px">
          <ObjectInspector />
          <PropertyEditor />
          <ResourceBrowser />
          <div className="absolute top-[299px] right-0 flex h-[51px] w-[9px] items-end rounded-full border-2 border-[#666] p-px">
            <div className="h-[26px] w-full rounded-full bg-[#ff7f27]" />
          </div>
        </aside>
      </div>
      <footer className="flex h-[22px] shrink-0 items-start justify-end pr-[15px] leading-3 text-[#8f8f8f]">
        CSDN @Zhuwany
      </footer>
    </div>
  );
}
